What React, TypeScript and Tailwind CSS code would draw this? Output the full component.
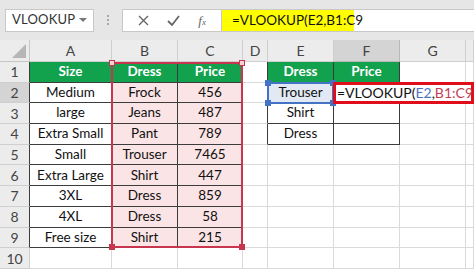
const cols = ["A", "B", "C", "D", "E", "F", "G", ""];

const rows: string[][] = [
  ["Size", "Dress", "Price", "", "Dress", "Price", "", ""],
  ["Medium", "Frock", "456", "", "Trouser", "", "", ""],
  ["large", "Jeans", "487", "", "Shirt", "", "", ""],
  ["Extra Small", "Pant", "789", "", "Dress", "", "", ""],
  ["Small", "Trouser", "7465", "", "", "", "", ""],
  ["Extra Large", "Shirt", "447", "", "", "", "", ""],
  ["3XL", "Dress", "859", "", "", "", "", ""],
  ["4XL", "Dress", "58", "", "", "", "", ""],
  ["Free size", "Shirt", "215", "", "", "", "", ""],
  ["", "", "", "", "", "", "", ""],
];

function inMain(r: number, c: number) {
  return r <= 8 && c <= 2;
}

function inLookup(r: number, c: number) {
  return r <= 3 && (c === 4 || c === 5);
}

function cellClass(r: number, c: number) {
  const base = "h-[20.7px] flex items-center justify-center border-b border-r text-[13.5px] leading-none whitespace-nowrap";
  const table = inMain(r, c) || inLookup(r, c);
  let border = table ? "border-[#3c3c3c]" : "border-[#dadada]";
  if (c === 3 && r <= 3) border = "border-b-[#dadada] border-r-[#3c3c3c]";
  let bg = "bg-white text-[#111]";
  if (r === 0 && table) bg = "bg-[#12a14c] text-white font-bold";
  else if (r > 0 && r <= 8 && (c === 1 || c === 2)) bg = "bg-[#fbe4e5] text-[#111]";
  else if (r === 1 && c === 4) bg = "bg-[#e2e9f4] text-[#111]";
  return `${base} ${border} ${bg}`;
}

function Handle({ className }: { className: string }) {
  return <div className={`absolute w-[6px] h-[6px] ${className}`} />;
}

export default function App() {
  return (
    <div className="w-[474px] h-[269px] overflow-hidden bg-white font-[Lato,'Open_Sans',sans-serif] select-none">
      {/* formula bar */}
      <div className="h-[40px] bg-[#e6e6e6] flex items-center pl-[5px]">
        <div className="w-[89px] h-[23px] bg-white border border-[#c8c8c8] flex items-center justify-between pl-[6px] pr-[6px]">
          <span className="text-[13px] text-[#333] tracking-[0.2px]">VLOOKUP</span>
          <span className="w-0 h-0 border-l-[4px] border-r-[4px] border-t-[4px] border-l-transparent border-r-transparent border-t-[#777]" />
        </div>
        <div className="w-[28px] flex flex-col items-center gap-[2px]">
          <span className="w-[2px] h-[2px] bg-[#aaa]" />
          <span className="w-[2px] h-[2px] bg-[#aaa]" />
          <span className="w-[2px] h-[2px] bg-[#aaa]" />
        </div>
        <div className="w-[100px] h-[23px] bg-white border border-[#c8c8c8] flex items-center justify-around px-[6px]">
          <svg width="11" height="11" viewBox="0 0 11 11">
            <path d="M1 1L10 10M10 1L1 10" stroke="#666" strokeWidth="1.4" />
          </svg>
          <svg width="13" height="11" viewBox="0 0 13 11">
            <path d="M1 6L5 10L12 1" stroke="#666" strokeWidth="1.8" fill="none" />
          </svg>
          <span className="italic text-[13px] text-[#666] font-['Liberation_Serif',serif] leading-none">
            f<span className="text-[9px]">x</span>
          </span>
        </div>
        <div className="flex-1 h-[23px] bg-white border-y border-[#c8c8c8] flex items-center">
          <div className="w-[132px] h-full bg-[#ffff00] flex items-center pl-[10px] text-[13.5px] text-[#111]">
            =VLOOKUP(E2,B1:C9
          </div>
        </div>
      </div>

      {/* sheet */}
      <div className="relative">
        <div className="grid grid-cols-[30px_82px_66px_65px_25px_66px_66px_66px_8px]">
          {/* column headers */}
          <div className="h-[22px] bg-[#ececec] border-r border-b border-[#c6c6c6] relative">
            <svg className="absolute right-[3px] bottom-[3px]" width="14" height="14" viewBox="0 0 14 14">
              <path d="M14 0L14 14L0 14Z" fill="#b6b6b6" />
            </svg>
          </div>
          {cols.map((c, i) => (
            <div
              key={i}
              className={`h-[22px] flex items-center justify-center border-r border-b text-[14px] text-[#444] ${
                c === "F" ? "bg-[#d4d4d4] border-[#b8b8b8]" : "bg-[#ececec] border-[#cfcfcf]"
              }`}
            >
              {c}
            </div>
          ))}

          {rows.map((row, r) => (
            <div key={r} className="contents">
              <div
                className={`h-[20.7px] flex items-center justify-center border-b text-[14px] text-[#444] border-r ${
                  r === 1 ? "bg-[#d4d4d4]" : "bg-[#ececec]"
                } ${r <= 8 ? "border-b-[#cfcfcf] border-r-[#3c3c3c]" : "border-[#cfcfcf]"}`}
              >
                {r + 1}
              </div>
              {row.map((v, c) => (
                <div key={c} className={cellClass(r, c)}>
                  {v}
                </div>
              ))}
            </div>
          ))}
        </div>

        {/* selected range B1:C9 */}
        <div className="absolute left-[111px] top-[22px] w-[132px] h-[186.3px] border-2 border-[#c7354e]">
          <Handle className="-left-[4px] -top-[4px] bg-[#f3d3d8] border border-[#c7354e]" />
          <Handle className="-right-[4px] -top-[4px] bg-[#f3d3d8] border border-[#c7354e]" />
          <Handle className="-left-[4px] -bottom-[4px] bg-[#c7354e]" />
          <Handle className="-right-[4px] -bottom-[4px] bg-[#c7354e]" />
        </div>

        {/* lookup value E2 */}
        <div className="absolute left-[267px] top-[42.2px] w-[67px] h-[21.5px] border-2 border-[#4472c4]">
          <Handle className="-left-[4px] -top-[4px] bg-[#4472c4]" />
          <Handle className="-right-[4px] -top-[4px] bg-[#4472c4]" />
          <Handle className="-left-[4px] -bottom-[4px] bg-[#4472c4]" />
          <Handle className="-right-[4px] -bottom-[4px] bg-[#4472c4]" />
        </div>

        {/* editing cell F2 */}
        <div className="absolute left-[333px] top-[42px] w-[141px] h-[22px] border-[3px] border-[#e00d1a] bg-white flex items-center pl-[1px] text-[14px] leading-none text-[#111] whitespace-nowrap">
          <span>=VLOOKUP(</span>
          <span className="text-[#4d73c0]">E2</span>
          <span>,</span>
          <span className="text-[#c23c55]">B1:C9</span>
          <span className="w-[1px] h-[14px] bg-[#111] ml-[1px]" />
        </div>
      </div>
    </div>
  );
}
